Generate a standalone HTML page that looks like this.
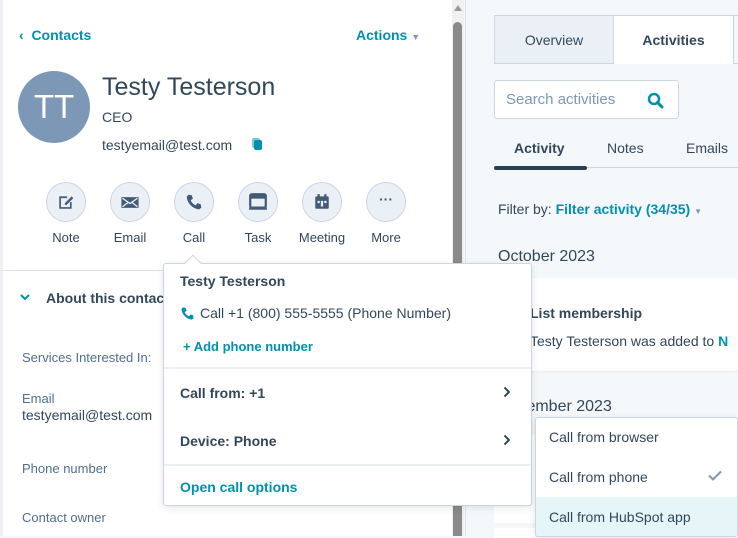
<!DOCTYPE html>
<html><head><style>
*{margin:0;padding:0;box-sizing:border-box}
body{width:738px;height:536px;overflow:hidden;font-family:"Liberation Sans",sans-serif;background:#f5f8fa;position:relative;color:#33475b}
.a{position:absolute;white-space:nowrap}
.left{position:absolute;left:0;top:0;width:452px;height:536px;background:#fff}
.teal{color:#0091ae;font-weight:bold}
.circ{position:absolute;top:182px;width:40px;height:40px;border-radius:50%;background:#eaf0f6;border:1px solid #cbd6e2;display:flex;align-items:center;justify-content:center}
.lbl{position:absolute;top:230px;font-size:13px;width:60px;text-align:center}
.fl{position:absolute;left:22px;font-size:13px;color:#516f90}
</style></head><body>
<div class="left">
  <div class="a" style="left:0;top:0;width:3px;height:536px;background:#eef1f4"></div>
  <div class="a teal" style="left:19px;top:27px;font-size:14px">‹ &nbsp;Contacts</div>
  <div class="a teal" style="left:356px;top:27px;font-size:14px">Actions <span style="font-size:9px;color:#7c98b6">▼</span></div>
  <div class="a" style="left:18px;top:71px;width:72px;height:72px;border-radius:50%;background:#7c98b6;color:#fff;font-size:33px;text-align:center;line-height:72px">TT</div>
  <div class="a" style="left:102px;top:73px;font-size:25px;color:#33475b">Testy Testerson</div>
  <div class="a" style="left:102px;top:109px;font-size:14px">CEO</div>
  <div class="a" style="left:102px;top:137px;font-size:14px">testyemail@test.com</div>
  <div class="a" style="left:254px;top:140px;width:8px;height:10px;background:#0091ae;border-radius:2px;box-shadow:-2px -2px 0 0 #7fc8d6"></div>
  <div class="circ" style="left:46px"><svg width="18" height="18" viewBox="0 0 16 16"><path d="M2 3h7v1.5H3.5v8h8V8H13v6H2z M7 9l6-6 1.5 1.5-6 6H7z" fill="#425b76"/></svg></div>
  <div class="circ" style="left:110px"><svg width="20" height="15" viewBox="0 0 18 14"><rect x="1" y="2" width="16" height="10" fill="#425b76"/><path d="M2 3l7 5 7-5M2 11l5-4M16 11l-5-4" stroke="#eaf0f6" stroke-width="1.2" fill="none"/></svg></div>
  <div class="circ" style="left:174px"><svg width="18" height="18" viewBox="0 0 16 16"><path d="M3 1.5l3 .5 1 3-2 1.5c1 2 2.5 3.5 4.5 4.5L11 9l3 1 .5 3-2 1.5C7 14 2 9 1.5 3.5z" fill="#425b76"/></svg></div>
  <div class="circ" style="left:238px"><svg width="20" height="18" viewBox="0 0 18 16"><rect x="2" y="1" width="14" height="12" rx="1.5" fill="none" stroke="#425b76" stroke-width="2"/><rect x="2" y="1" width="14" height="4" fill="#425b76"/><path d="M1 14h16" stroke="#425b76" stroke-width="2"/></svg></div>
  <div class="circ" style="left:302px"><svg width="18" height="18" viewBox="0 0 16 16"><rect x="2" y="3" width="12" height="11" rx="1" fill="#425b76"/><rect x="4" y="1" width="2" height="3" fill="#425b76"/><rect x="10" y="1" width="2" height="3" fill="#425b76"/><rect x="4" y="7" width="2" height="2" fill="#eaf0f6"/><rect x="7" y="7" width="2" height="5" fill="#eaf0f6"/><rect x="10" y="7" width="2" height="2" fill="#eaf0f6"/></svg></div>
  <div class="circ" style="left:366px;font-size:14px;color:#425b76;font-weight:bold;line-height:1;padding-bottom:6px">···</div>
  <div class="lbl" style="left:36px">Note</div>
  <div class="lbl" style="left:100px">Email</div>
  <div class="lbl" style="left:164px">Call</div>
  <div class="lbl" style="left:228px">Task</div>
  <div class="lbl" style="left:292px">Meeting</div>
  <div class="lbl" style="left:356px">More</div>
  <div class="a" style="left:0;top:270px;width:452px;height:1px;background:#dfe3eb"></div>
  <svg class="a" style="left:20px;top:294px" width="10" height="7" viewBox="0 0 10 7"><path d="M1 1l4 4 4-4" stroke="#0091ae" stroke-width="2" fill="none"/></svg>
  <div class="a" style="left:46px;top:290px;font-size:14px;font-weight:bold;color:#33475b">About this contact</div>
  <div class="fl" style="top:350px">Services Interested In:</div>
  <div class="fl" style="top:391px">Email</div>
  <div class="a" style="left:22px;top:407px;font-size:14px">testyemail@test.com</div>
  <div class="fl" style="top:461px">Phone number</div>
  <div class="fl" style="top:510px">Contact owner</div>
</div>
<div class="a" style="left:452px;top:0;width:12px;height:536px;background:#f0f0f0"></div>
<div class="a" style="left:454px;top:5px;width:0;height:0;border-left:4px solid transparent;border-right:4px solid transparent;border-bottom:6px solid #999"></div>
<div class="a" style="left:453px;top:22px;width:9px;height:514px;background:#8a8a8a;border-radius:5px 5px 0 0"></div>
<div class="a" style="left:465px;top:0;width:1px;height:536px;background:#dfe3eb"></div>

<div class="a" style="left:494px;top:15px;width:120px;height:49px;background:#eaf0f6;border:1px solid #cbd6e2;font-size:14px;text-align:center;line-height:48px">Overview</div>
<div class="a" style="left:613px;top:15px;width:121px;height:49px;background:#fff;border:1px solid #cbd6e2;border-bottom:none;font-size:14px;font-weight:bold;text-align:center;line-height:48px">Activities</div>
<div class="a" style="left:733px;top:15px;width:10px;height:49px;background:#f5f8fa;border:1px solid #cbd6e2"></div>
<div class="a" style="left:494px;top:80px;width:185px;height:39px;background:#fff;border:1px solid #cbd6e2;border-radius:3px"></div>
<div class="a" style="left:506px;top:91px;font-size:15px;color:#7c98b6">Search activities</div>
<svg class="a" style="left:647px;top:92px" width="17" height="17" viewBox="0 0 17 17"><circle cx="7" cy="7" r="5" fill="none" stroke="#0091ae" stroke-width="2.5"/><path d="M10.5 10.5l4.5 4.5" stroke="#0091ae" stroke-width="3" stroke-linecap="round"/></svg>
<div class="a" style="left:514px;top:140px;font-size:14px;font-weight:bold">Activity</div>
<div class="a" style="left:607px;top:140px;font-size:14px">Notes</div>
<div class="a" style="left:686px;top:140px;font-size:14px">Emails</div>
<div class="a" style="left:494px;top:167px;width:244px;height:1px;background:#cbd6e2"></div>
<div class="a" style="left:494px;top:166px;width:93px;height:4px;background:#2d3e50;border-radius:2px"></div>
<div class="a" style="left:498px;top:201px;font-size:14px">Filter by: <span class="teal">Filter activity (34/35)</span> <span style="font-size:8px;color:#7c98b6">▼</span></div>
<div class="a" style="left:498px;top:248px;font-size:16px">October 2023</div>
<div class="a" style="left:494px;top:278px;width:244px;height:93px;background:#fff;border-radius:3px;box-shadow:0 1px 2px rgba(0,0,0,.05)"></div>
<div class="a" style="left:530px;top:305px;font-size:14px;font-weight:bold">List membership</div>
<div class="a" style="left:530px;top:333px;font-size:14px">Testy Testerson was added to <span class="teal">N</span></div>
<div class="a" style="left:498px;top:398px;font-size:16px">November 2023</div>
<div class="a" style="left:494px;top:435px;width:244px;height:88px;background:#fff"></div>
<div class="a" style="left:494px;top:528px;width:244px;height:10px;background:#fff"></div>

<div class="a" style="left:163px;top:263px;width:369px;height:243px;background:#fff;border:1px solid #cbd6e2;border-radius:3px;box-shadow:0 2px 8px rgba(0,0,0,.1)">
  <div class="a" style="left:23px;top:-7px;width:12px;height:12px;background:#fff;border-left:1px solid #cbd6e2;border-top:1px solid #cbd6e2;transform:rotate(45deg)"></div>
  <div class="a" style="left:16px;top:9px;font-size:14px;font-weight:bold">Testy Testerson</div>
  <svg class="a" style="left:16px;top:42px" width="15" height="15" viewBox="0 0 16 16"><path d="M3 1.5l3 .5 1 3-2 1.5c1 2 2.5 3.5 4.5 4.5L11 9l3 1 .5 3-2 1.5C7 14 2 9 1.5 3.5z" fill="#0091ae"/></svg>
  <div class="a" style="left:36px;top:41px;font-size:14px">Call +1 (800) 555-5555 (Phone Number)</div>
  <div class="a teal" style="left:19px;top:75px;font-size:13px">+ Add phone number</div>
  <div class="a" style="left:0;top:103px;width:367px;height:2px;background:#eaf0f6"></div>
  <div class="a" style="left:16px;top:121px;font-size:14px;font-weight:bold">Call from: +1</div>
  <svg class="a" style="left:339px;top:122px" width="8" height="12" viewBox="0 0 8 12"><path d="M1.5 1.5l4.5 4.5-4.5 4.5" stroke="#33475b" stroke-width="2" fill="none"/></svg>
  <div class="a" style="left:16px;top:169px;font-size:14px;font-weight:bold">Device: Phone</div>
  <svg class="a" style="left:339px;top:170px" width="8" height="12" viewBox="0 0 8 12"><path d="M1.5 1.5l4.5 4.5-4.5 4.5" stroke="#33475b" stroke-width="2" fill="none"/></svg>
  <div class="a" style="left:0;top:200px;width:367px;height:2px;background:#eaf0f6"></div>
  <div class="a teal" style="left:16px;top:215px;font-size:14px">Open call options</div>
</div>

<div class="a" style="left:535px;top:417px;width:203px;height:120px;background:#fff;border:1px solid #cbd6e2;border-radius:3px;box-shadow:0 2px 8px rgba(0,0,0,.1);overflow:hidden">
  <div class="a" style="left:13px;top:11px;font-size:14px">Call from browser</div>
  <div class="a" style="left:13px;top:51px;font-size:14px">Call from phone</div>
  <svg class="a" style="left:172px;top:52px" width="14" height="11" viewBox="0 0 14 11"><path d="M1 5.5l4 4 8-8" stroke="#7c98b6" stroke-width="2" fill="none"/></svg>
  <div class="a" style="left:0;top:79px;width:203px;height:41px;background:#e5f5f8"></div>
  <div class="a" style="left:13px;top:91px;font-size:14px">Call from HubSpot app</div>
</div>
</body></html>
